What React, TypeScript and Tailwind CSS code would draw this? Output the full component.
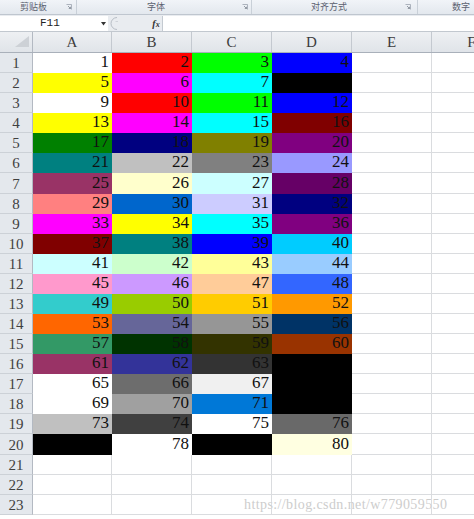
import React from "react";

const FILL: string[] = [
  "",
  "#FFFFFF", "#FF0000", "#00FF00", "#0000FF", "#FFFF00", "#FF00FF", "#00FFFF", "#000000",
  "#FFFFFF", "#FF0000", "#00FF00", "#0000FF", "#FFFF00", "#FF00FF", "#00FFFF", "#800000",
  "#008000", "#000080", "#808000", "#800080", "#008080", "#C0C0C0", "#808080", "#9999FF",
  "#993366", "#FFFFCC", "#CCFFFF", "#660066", "#FF8080", "#0066CC", "#CCCCFF", "#000080",
  "#FF00FF", "#FFFF00", "#00FFFF", "#800080", "#800000", "#008080", "#0000FF", "#00CCFF",
  "#CCFFFF", "#CCFFCC", "#FFFF99", "#99CCFF", "#FF99CC", "#CC99FF", "#FFCC99", "#3366FF",
  "#33CCCC", "#99CC00", "#FFCC00", "#FF9900", "#FF6600", "#666699", "#969696", "#003366",
  "#339966", "#003300", "#333300", "#993300", "#993366", "#333399", "#333333", "#000000",
  "#FFFFFF", "#6D6D6D", "#F0F0F0", "#000000", "#FFFFFF", "#A0A0A0", "#0078D7", "#000000",
  "#C0C0C0", "#404040", "#FFFFFF", "#696969", "#000000", "#FFFFFF", "#000000", "#FFFFE1",
];

const HIDDEN = new Set([8, 64, 68, 72, 77, 79]);

const ROW_H = [20, 20, 20, 20, 20, 20, 21, 20, 20, 20, 20, 20, 20, 20, 20, 20, 20, 20, 20, 21, 20, 20, 20];

const serif = { fontFamily: '"Liberation Serif", "DejaVu Serif", serif' };

function Launcher() {
  return (
    <svg width="6" height="6" viewBox="0 0 6 6" className="shrink-0">
      <path d="M0.5 0.5H5.5V5.5" fill="none" stroke="#9aa2ad" strokeWidth="0.8" />
      <path d="M2 2L4.5 4.5M4.5 2.8V4.5H2.8" fill="none" stroke="#7d8591" strokeWidth="0.8" />
    </svg>
  );
}

function Ribbon() {
  return (
    <div
      className="flex h-[15px] border-b border-[#bfc6cf] bg-gradient-to-b from-[#f1f4f8] to-[#e3e8ee] text-[9px] leading-[14px] text-[#5b6170]"
      style={{ fontFamily: '"Noto Sans CJK SC", sans-serif' }}
    >
      <div className="flex w-[77px] items-center border-r border-[#c9d0d8] pl-[20px] pr-[4px]">
        <span className="flex-1">剪贴板</span>
        <Launcher />
      </div>
      <div className="flex w-[175px] items-center border-r border-[#c9d0d8] pr-[3px]">
        <span className="flex-1 pl-[70px]">字体</span>
        <Launcher />
      </div>
      <div className="flex w-[166px] items-center border-r border-[#c9d0d8] pr-[6px]">
        <span className="flex-1 pl-[59px]">对齐方式</span>
        <Launcher />
      </div>
      <div className="flex flex-1 items-center pl-[34px]">
        <span>数字</span>
      </div>
    </div>
  );
}

function FormulaBar() {
  return (
    <div className="flex h-[17px] border-b border-[#c2c8cf] bg-[#e9ecf0] pt-[1px]">
      <div className="flex h-[15px] w-[108px] items-center bg-white">
        <span
          className="ml-[40px] flex-1 text-[11px] leading-[15px] text-[#222]"
          style={{ fontFamily: '"Liberation Mono", monospace' }}
        >
          F11
        </span>
        <svg width="5" height="4" viewBox="0 0 5 4" className="mr-[2px]">
          <path d="M0 0H5L2.5 3.5Z" fill="#333" />
        </svg>
      </div>
      <div className="relative w-[42px]">
        <svg width="14" height="15" viewBox="0 0 14 15" className="absolute left-[2px] top-0">
          <path d="M7 1.5A6 6 0 0 0 7 13.5" fill="none" stroke="#b7bdc5" strokeWidth="1" />
          <path d="M5.5 5.5H8" stroke="#c8cdd3" strokeWidth="0.8" />
        </svg>
      </div>
      <div className="flex w-[13px] items-center justify-center border-r border-[#c4cad1]">
        <span className="text-[10px] font-bold italic leading-[15px] text-[#333]" style={serif}>
          f<span className="text-[8px]">x</span>
        </span>
      </div>
      <div className="h-[15px] flex-1 bg-white" />
    </div>
  );
}

const COLS = ["A", "B", "C", "D", "E", "F", "G"];
const COL_W = [79, 80, 80, 80, 80, 80, 80];

function HeaderRow() {
  return (
    <div className="flex h-[21px] border-b border-[#a9b0ba]">
      <div className="relative w-[33px] shrink-0 border-r border-[#b3b9c2] bg-gradient-to-b from-[#eef0f3] to-[#e0e4e9]">
        <svg width="16" height="13" viewBox="0 0 16 13" className="absolute left-[15px] top-[4px]">
          <path d="M14 0V11H0Z" fill="#cdd1d6" />
        </svg>
      </div>
      {COLS.map((c, i) => (
        <div
          key={c}
          className="flex shrink-0 items-center justify-center border-r border-[#c4c9d0] bg-gradient-to-b from-[#eef0f3] to-[#e0e4e9] text-[15px] leading-[20px] text-[#3c3c3c]"
          style={{ ...serif, width: COL_W[i] }}
        >
          {c}
        </div>
      ))}
    </div>
  );
}

function BodyRow({ r }: { r: number }) {
  const h = ROW_H[r - 1];
  return (
    <div className="flex" style={{ height: h }}>
      <div
        className="flex w-[33px] shrink-0 items-center justify-center border-b border-r border-b-[#ccd1d7] border-r-[#b3b9c2] bg-[#e4e8ed] pt-[1px] text-[15px] leading-[18px] text-[#3f3f3f]"
        style={serif}
      >
        {r}
      </div>
      {COLS.map((c, i) => {
        const idx = r <= 20 && i < 4 ? (r - 1) * 4 + i + 1 : 0;
        const fill = idx ? FILL[idx] : "";
        return (
          <div
            key={c}
            className="flex shrink-0 items-end justify-end border-b border-r border-[#dadcdf] pb-[2px] pr-[2px] text-[17px] leading-[17px] text-[#111]"
            style={{
              ...serif,
              width: COL_W[i],
              backgroundColor: fill || "#ffffff",
              borderColor: fill || "#dadcdf",
            }}
          >
            {idx && !HIDDEN.has(idx) ? idx : ""}
          </div>
        );
      })}
    </div>
  );
}

export default function App() {
  const rows = Array.from({ length: 23 }, (_, i) => i + 1);
  return (
    <div className="relative h-[519px] w-[474px] overflow-hidden bg-white">
      <Ribbon />
      <FormulaBar />
      <HeaderRow />
      {rows.map((r) => (
        <BodyRow key={r} r={r} />
      ))}
      <div
        className="pointer-events-none absolute left-[244px] top-[497px] text-[14px] leading-[16px] tracking-[0.4px] text-[#cdcdcd]"
        style={{ ...serif, textShadow: "0 0 1px #fff" }}
      >
        https://blog.csdn.net/w779059550
      </div>
    </div>
  );
}
